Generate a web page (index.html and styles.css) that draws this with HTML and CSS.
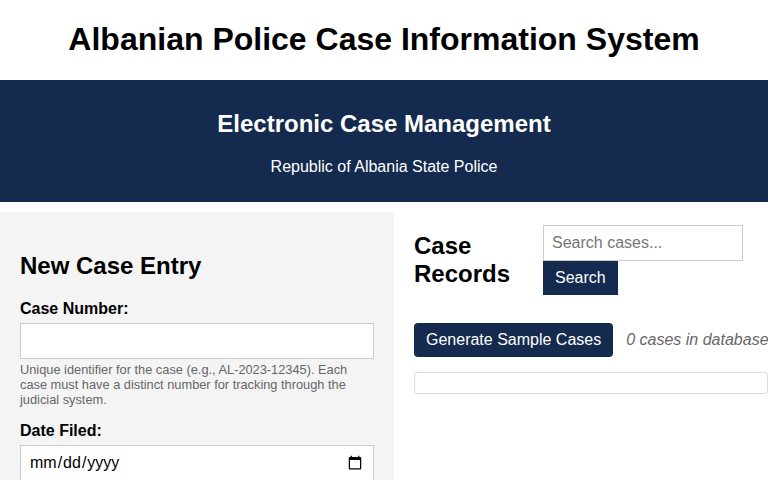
FILE: index.html
```html
<!DOCTYPE html>
<html lang="en">
<head>
<meta charset="utf-8">
<title>Albanian Police Case Information System</title>
<link rel="stylesheet" href="styles.css">
</head>
<body>
<h1 class="site-title">Albanian Police Case Information System</h1>
<header class="banner">
  <h2 class="banner-title">Electronic Case Management</h2>
  <p class="banner-sub">Republic of Albania State Police</p>
</header>
<main class="layout">
  <section class="panel">
    <h2 class="section-title">New Case Entry</h2>
    <div class="form-group">
      <label class="field-label" for="caseNumber">Case Number:</label>
      <input class="field" id="caseNumber" type="text">
      <small class="help">Unique identifier for the case (e.g., AL-2023-12345). Each case must have a distinct number for tracking through the judicial system.</small>
    </div>
    <div class="form-group">
      <label class="field-label" for="dateFiled">Date Filed:</label>
      <input class="field" id="dateFiled" type="date">
    </div>
  </section>
  <section class="records">
    <div class="records-header">
      <h2 class="section-title records-title">Case Records</h2>
      <div class="search">
        <input class="search-input" type="text" placeholder="Search cases...">
        <button class="search-btn" type="button">Search</button>
      </div>
    </div>
    <div class="toolbar">
      <button class="primary-btn" type="button">Generate Sample Cases</button>
      <span class="count">0 cases in database</span>
    </div>
    <div class="case-list"></div>
  </section>
</main>
</body>
</html>
```
FILE: styles.css
```css
html, body {
  margin: 0;
  padding: 0;
  background: #ffffff;
  font-family: "Liberation Sans", Arial, sans-serif;
  color: #000;
  overflow: hidden;
}

.site-title {
  font-size: 32px;
  font-weight: bold;
  text-align: center;
  margin: 21.44px 0;
}

.banner {
  background: #142a4e;
  color: #ffffff;
  text-align: center;
  padding: 10px 0;
}

.banner-title {
  font-size: 24px;
  margin: 19.92px 0;
}

.banner-sub {
  font-size: 16px;
  margin: 16px 0;
}

.layout {
  display: grid;
  grid-template-columns: 394px 354px;
  column-gap: 20px;
  margin-top: 10px;
}

.panel {
  background: #f4f4f4;
  border-radius: 4px;
  padding: 0 20px 20px;
  overflow: hidden;
}

.section-title {
  font-size: 24px;
  font-weight: bold;
  margin: 19.92px 0;
}

.panel > .section-title {
  margin-top: 39.92px;
}

.form-group {
  margin-bottom: 15px;
}

.field-label {
  display: block;
  font-weight: bold;
  font-size: 16px;
  margin-bottom: 5px;
}

.field {
  display: block;
  box-sizing: border-box;
  width: 100%;
  height: 36px;
  padding: 8px;
  border: 1px solid #cccccc;
  border-radius: 0;
  background: #fff;
  font-family: "Liberation Sans", Arial, sans-serif;
  font-size: 16px;
  color: #000;
}

.help {
  display: block;
  margin-top: 3px;
  font-size: 12.8px;
  line-height: 15px;
  color: #666666;
}

.records {
  min-width: 0;
}

.records-header {
  display: flex;
  align-items: center;
  margin-bottom: 15px;
}

.records-title {
  flex: 1;
  min-width: 0;
}

.search {
  width: 200px;
  margin-right: 25px;
}

.search-input {
  display: block;
  box-sizing: border-box;
  width: 200px;
  height: 36px;
  padding: 8px;
  border: 1px solid #cccccc;
  font-family: "Liberation Sans", Arial, sans-serif;
  font-size: 16px;
}

.search-input::placeholder {
  color: #757575;
}

.search-btn {
  display: block;
  height: 34px;
  padding: 0 12px;
  border: none;
  border-radius: 0;
  background: #142a4e;
  color: #fff;
  font-family: "Liberation Sans", Arial, sans-serif;
  font-size: 16px;
}

.toolbar {
  display: flex;
  align-items: center;
  white-space: nowrap;
  margin-bottom: 15px;
}

.primary-btn {
  height: 34px;
  padding: 0 12px;
  border: none;
  border-radius: 4px;
  background: #142a4e;
  color: #fff;
  font-family: "Liberation Sans", Arial, sans-serif;
  font-size: 16px;
}

.count {
  margin-left: 13px;
  font-style: italic;
  color: #666666;
  font-size: 16px;
}

.case-list {
  box-sizing: border-box;
  height: 22px;
  border: 1px solid #dddddd;
  border-radius: 3px;
  padding: 10px;
}
```
